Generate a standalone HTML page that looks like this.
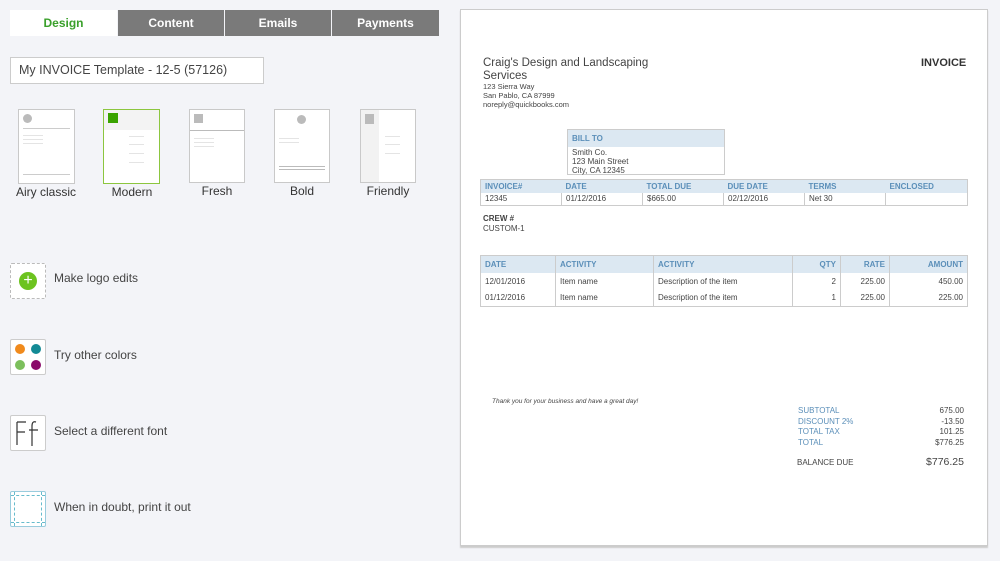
<!DOCTYPE html>
<html><head><meta charset="utf-8"><style>
*{margin:0;padding:0;box-sizing:border-box}
body{width:1000px;height:561px;background:#f3f4f8;font-family:"Liberation Sans",sans-serif;position:relative;overflow:hidden;color:#333}
.a{position:absolute}
.tab{position:absolute;top:10px;height:26px;background:#7a7a7a;color:#fff;font-weight:bold;font-size:12px;text-align:center;line-height:26px}
.th{position:absolute;background:#fff;border:1px solid #c9c9c9}
.tl{position:absolute;font-size:12px;color:#333;text-align:center;width:80px}
.ln{position:absolute;height:1px;background:#ddd}
.sl{position:absolute;height:1px;background:#e4e4e4}
.ic{position:absolute;left:10px;width:36px;height:36px;background:#fff;border:1px solid #ccc;border-radius:2px}
.it{position:absolute;left:54px;font-size:12px;color:#444}
.paper{position:absolute;left:460px;top:9px;width:528px;height:537px;background:#fff;border:1px solid #ccc;box-shadow:0 2px 1px #ccc}
table{border-collapse:collapse;position:absolute;font-size:8px}
td,th{text-align:left;padding:0 4px;font-weight:normal}
th{color:#5b8fb9;font-weight:bold;background:#dce8f2}
.bl{color:#5b8fb9}
</style></head><body>
<div class="tab" style="left:10px;width:107px;background:#fff;color:#3aa02b">Design</div>
<div class="tab" style="left:118px;width:106px">Content</div>
<div class="tab" style="left:225px;width:106px">Emails</div>
<div class="tab" style="left:332px;width:107px">Payments</div>
<div class="a" style="left:10px;top:57px;width:254px;height:27px;background:#fff;border:1px solid #ccc;font-size:12.5px;line-height:25px;padding-left:8px;color:#444">My INVOICE Template - 12-5 (57126)</div>

<div class="th" style="left:18px;top:109px;width:57px;height:75px"><div class="a" style="left:4px;top:4px;width:9px;height:9px;border-radius:50%;background:#bbb"></div><div class="ln" style="left:4px;top:18px;width:47px;background:#ccc"></div><div class="sl" style="left:4px;top:25px;width:20px"></div><div class="sl" style="left:4px;top:29px;width:20px"></div><div class="sl" style="left:4px;top:33px;width:20px"></div><div class="ln" style="left:4px;top:64px;width:47px;background:#ccc"></div></div>
<div class="tl" style="left:6px;top:185px">Airy classic</div>
<div class="th" style="left:103px;top:109px;width:57px;height:75px;border:1px solid #8cc63f"><div class="a" style="left:0;top:0;width:55px;height:20px;background:#f3f3f3"></div><div class="a" style="left:4px;top:3px;width:10px;height:10px;background:#3aa300"></div><div class="sl" style="left:25px;top:26px;width:15px"></div><div class="sl" style="left:25px;top:34px;width:15px"></div><div class="sl" style="left:25px;top:43px;width:15px"></div><div class="sl" style="left:25px;top:52px;width:15px"></div></div>
<div class="tl" style="left:92px;top:185px">Modern</div>
<div class="th" style="left:189px;top:109px;width:56px;height:74px"><div class="a" style="left:4px;top:4px;width:9px;height:9px;background:#bbb"></div><div class="ln" style="left:0;top:20px;width:54px;background:#bbb"></div><div class="sl" style="left:4px;top:28px;width:20px"></div><div class="sl" style="left:4px;top:32px;width:20px"></div><div class="sl" style="left:4px;top:36px;width:20px"></div></div>
<div class="tl" style="left:177px;top:184px">Fresh</div>
<div class="th" style="left:274px;top:109px;width:56px;height:74px"><div class="a" style="left:22px;top:5px;width:9px;height:9px;border-radius:50%;background:#bbb"></div><div class="sl" style="left:4px;top:28px;width:20px"></div><div class="sl" style="left:4px;top:32px;width:20px"></div><div class="ln" style="left:4px;top:56px;width:46px;background:#bbb"></div><div class="ln" style="left:4px;top:59px;width:46px;background:#bbb"></div></div>
<div class="tl" style="left:262px;top:184px">Bold</div>
<div class="th" style="left:360px;top:109px;width:56px;height:74px"><div class="a" style="left:0;top:0;width:18px;height:72px;background:#f2f2f2"></div><div class="a" style="left:4px;top:4px;width:9px;height:10px;background:#bbb"></div><div class="sl" style="left:24px;top:26px;width:15px"></div><div class="sl" style="left:24px;top:34px;width:15px"></div><div class="sl" style="left:24px;top:43px;width:15px"></div></div>
<div class="tl" style="left:348px;top:184px">Friendly</div>

<div class="ic" style="top:263px;border:1px dashed #bbb"><div class="a" style="left:8px;top:8px;width:18px;height:18px;border-radius:50%;background:#6cc31f;color:#fff;font-size:16px;line-height:18px;text-align:center">+</div></div>
<div class="it" style="top:271px">Make logo edits</div>
<div class="ic" style="top:339px"><div class="a" style="left:4px;top:4px;width:10px;height:10px;border-radius:50%;background:#f08a1c"></div><div class="a" style="left:20px;top:4px;width:10px;height:10px;border-radius:50%;background:#138a95"></div><div class="a" style="left:4px;top:20px;width:10px;height:10px;border-radius:50%;background:#7cbf5c"></div><div class="a" style="left:20px;top:20px;width:10px;height:10px;border-radius:50%;background:#8a0b6a"></div></div>
<div class="it" style="top:348px">Try other colors</div>
<div class="ic" style="top:415px">
<svg class="a" style="left:0;top:0" width="34" height="34" viewBox="0 0 34 34" fill="none" stroke="#333" stroke-width="1.2"><path d="M6 6V29M6 6H15M6 16H14M25 6C22 5 21 7 21 10V30M18 14H27"/></svg></div>
<div class="it" style="top:424px">Select a different font</div>
<div class="ic" style="top:491px;border-color:#9cd"><div class="a" style="left:0;top:3px;width:34px;border-top:1px dashed #6bc"></div><div class="a" style="left:0;top:30px;width:34px;border-top:1px dashed #6bc"></div><div class="a" style="left:3px;top:0;height:34px;border-left:1px dashed #6bc"></div><div class="a" style="left:30px;top:0;height:34px;border-left:1px dashed #6bc"></div></div>
<div class="it" style="top:500px">When in doubt, print it out</div>

<div class="paper"></div>
<div class="a" style="left:483px;top:57px;font-size:11.5px;line-height:13px;color:#444">Craig's Design and Landscaping<br>Services</div>
<div class="a" style="left:483px;top:82px;font-size:7.5px;line-height:9px;color:#444">123 Sierra Way<br>San Pablo, CA 87999<br>noreply@quickbooks.com</div>
<div class="a" style="left:921px;top:57px;font-size:11px;font-weight:bold;color:#333">INVOICE</div>
<div class="a" style="left:567px;top:129px;width:158px;height:46px;border:1px solid #ccc;font-size:8px;line-height:9px">
<div style="background:#dce8f2;color:#5b8fb9;font-weight:bold;height:17px;line-height:17px;padding-left:4px">BILL TO</div>
<div style="padding:1px 4px;color:#444">Smith Co.<br>123 Main Street<br>City, CA 12345</div></div>

<table style="left:480px;top:179px;width:488px;border:1px solid #ccc">
<tr style="height:13px"><th style="width:81px">INVOICE#</th><th style="width:81px">DATE</th><th style="width:81px">TOTAL DUE</th><th style="width:81px">DUE DATE</th><th style="width:81px">TERMS</th><th>ENCLOSED</th></tr>
<tr style="height:13px;color:#444"><td style="border-right:1px solid #ccc">12345</td><td style="border-right:1px solid #ccc">01/12/2016</td><td style="border-right:1px solid #ccc">$665.00</td><td style="border-right:1px solid #ccc">02/12/2016</td><td style="border-right:1px solid #ccc">Net 30</td><td></td></tr></table>
<div class="a" style="left:483px;top:214px;font-size:8px;line-height:10px;color:#444"><b>CREW #</b><br>CUSTOM-1</div>

<table style="left:480px;top:255px;width:488px;border:1px solid #ccc;color:#444">
<tr style="height:17px"><th style="width:75px;border-right:1px solid #ccc">DATE</th><th style="width:98px;border-right:1px solid #ccc">ACTIVITY</th><th style="width:139px;border-right:1px solid #ccc">ACTIVITY</th><th style="width:48px;text-align:right;border-right:1px solid #ccc">QTY</th><th style="width:49px;text-align:right;border-right:1px solid #ccc">RATE</th><th style="text-align:right">AMOUNT</th></tr>
<tr style="height:17px"><td style="border-right:1px solid #ccc">12/01/2016</td><td style="border-right:1px solid #ccc">Item name</td><td style="border-right:1px solid #ccc">Description of the item</td><td style="text-align:right;border-right:1px solid #ccc">2</td><td style="text-align:right;border-right:1px solid #ccc">225.00</td><td style="text-align:right">450.00</td></tr>
<tr style="height:17px"><td style="border-right:1px solid #ccc">01/12/2016</td><td style="border-right:1px solid #ccc">Item name</td><td style="border-right:1px solid #ccc">Description of the item</td><td style="text-align:right;border-right:1px solid #ccc">1</td><td style="text-align:right;border-right:1px solid #ccc">225.00</td><td style="text-align:right">225.00</td></tr></table>

<div class="a" style="left:492px;top:398px;font-size:6.5px;font-style:italic;color:#444">Thank you for your business and have a great day!</div>
<div class="a bl" style="left:798px;top:406px;font-size:8px;line-height:10.5px">SUBTOTAL<br>DISCOUNT 2%<br>TOTAL TAX<br>TOTAL</div>
<div class="a" style="left:900px;top:406px;width:64px;text-align:right;font-size:8px;line-height:10.5px;color:#444">675.00<br>-13.50<br>101.25<br>$776.25</div>
<div class="a" style="left:797px;top:458px;font-size:8px;color:#444">BALANCE DUE</div>
<div class="a" style="left:900px;top:456px;width:64px;text-align:right;font-size:10.5px;color:#444">$776.25</div>
</body></html>
